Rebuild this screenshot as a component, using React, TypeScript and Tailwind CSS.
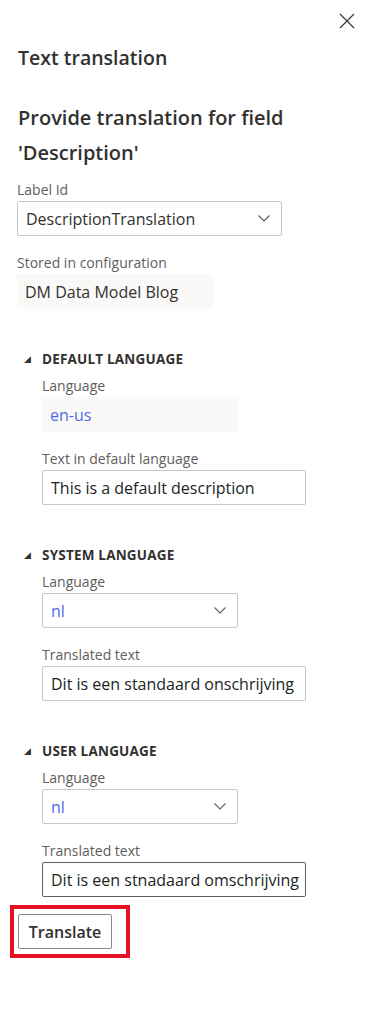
const font = { fontFamily: '"Open Sans", "Noto Sans", sans-serif' };

function Chevron() {
  return (
    <svg width="12" height="7" viewBox="0 0 12 7" fill="none" className="text-[#605e5c]">
      <path d="M0.5 0.5 L6 6 L11.5 0.5" stroke="currentColor" strokeWidth="1.1" />
    </svg>
  );
}

function Label({ children }: { children: React.ReactNode }) {
  return <div className="text-[14px] leading-[18px] font-medium text-[#605e5c] mb-[2px]">{children}</div>;
}

function Dropdown({ value, width, blue }: { value: string; width: string; blue?: boolean }) {
  return (
    <div className={`${width} h-[35px] border border-[#c8c6c4] rounded-[2px] flex items-center justify-between pl-[8px] pr-[11px] bg-white`}>
      <span className={`text-[16px] ${blue ? "text-[#4f6bed]" : "text-[#323130]"}`}>{value}</span>
      <Chevron />
    </div>
  );
}

function ReadOnly({ value, width, blue }: { value: string; width: string; blue?: boolean }) {
  return (
    <div className={`${width} h-[35px] bg-[#faf9f8] flex items-center pl-[8px]`}>
      <span className={`text-[16px] ${blue ? "text-[#4f6bed]" : "text-[#323130]"}`}>{value}</span>
    </div>
  );
}

function TextInput({ value, dark }: { value: string; dark?: boolean }) {
  return (
    <div className={`w-[264px] h-[35px] border rounded-[2px] flex items-center pl-[8px] bg-white ${dark ? "border-[#605e5c]" : "border-[#c8c6c4]"}`}>
      <span className="text-[16px] text-[#201f1e] whitespace-nowrap">{value}</span>
    </div>
  );
}

function Section({ title, children }: { title: string; children: React.ReactNode }) {
  return (
    <div className="mt-[40px]">
      <div className="flex items-center h-[20px]">
        <span className="text-[#323130] text-[9px] w-[24px] pl-[6px]">◢</span>
        <span className="text-[13.5px] font-bold tracking-[0.2px] text-[#323130]">{title}</span>
      </div>
      <div className="pl-[24px] mt-[8px] flex flex-col gap-[18px]">{children}</div>
    </div>
  );
}

export default function App() {
  return (
    <div className="w-[377px] h-[1024px] bg-white relative" style={font}>
      <button className="absolute left-[339px] top-[13px] text-[#323130]">
        <svg width="16" height="16" viewBox="0 0 16 16" fill="none">
          <path d="M1 1 L15 15 M15 1 L1 15" stroke="currentColor" strokeWidth="1.1" />
        </svg>
      </button>
      <div className="pl-[18px] pt-[45px]">
        <h1 className="text-[19.5px] leading-[26px] font-semibold text-[#323130]">Text translation</h1>
        <h2 className="mt-[29px] text-[20px] leading-[35px] font-semibold text-[#323130]">
          Provide translation for field
          <br />
          'Description'
        </h2>
        <div className="mt-[11px] -ml-[1px]">
          <Label>Label Id</Label>
          <Dropdown value="DescriptionTranslation" width="w-[265px]" />
        </div>
        <div className="mt-[18px] -ml-[1px]">
          <Label>Stored in configuration</Label>
          <ReadOnly value="DM Data Model Blog" width="w-[196px]" />
        </div>

        <Section title="DEFAULT LANGUAGE">
          <div>
            <Label>Language</Label>
            <ReadOnly value="en-us" width="w-[196px]" blue />
          </div>
          <div>
            <Label>Text in default language</Label>
            <TextInput value="This is a default description" />
          </div>
        </Section>

        <Section title="SYSTEM LANGUAGE">
          <div>
            <Label>Language</Label>
            <Dropdown value="nl" width="w-[196px]" blue />
          </div>
          <div>
            <Label>Translated text</Label>
            <TextInput value="Dit is een standaard onschrijving" />
          </div>
        </Section>

        <Section title="USER LANGUAGE">
          <div>
            <Label>Language</Label>
            <Dropdown value="nl" width="w-[196px]" blue />
          </div>
          <div>
            <Label>Translated text</Label>
            <TextInput value="Dit is een stnadaard omschrijving" dark />
          </div>
        </Section>

        <div className="-ml-[8px] mt-[8px] w-[120px] h-[53px] border-[4px] border-[#e81123] flex items-center pl-[4px]">
          <button className="w-[94px] h-[35px] border border-[#8a8886] rounded-[2px] text-[16px] font-semibold text-[#323130] bg-white">
            Translate
          </button>
        </div>
      </div>
    </div>
  );
}
